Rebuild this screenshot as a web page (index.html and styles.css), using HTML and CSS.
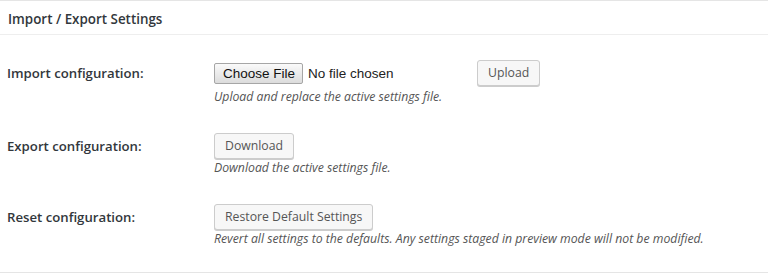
FILE: index.html
```html
<!DOCTYPE html>
<html>
<head>
<meta charset="utf-8">
<link rel="stylesheet" href="styles.css">
</head>
<body>
<div class="postbox">
  <h3 class="hndle">Import / Export Settings</h3>
  <div class="inside">
    <div class="row row-first">
      <div class="label">Import configuration:</div>
      <div class="field">
        <div class="line">
          <span class="file-input"><span class="file-btn">Choose File</span><span class="file-name">No file chosen</span></span>
          <span class="button">Upload</span>
        </div>
        <p class="desc desc-first">Upload and replace the active settings file.</p>
      </div>
    </div>
    <div class="row">
      <div class="label">Export configuration:</div>
      <div class="field">
        <div class="line"><span class="button">Download</span></div>
        <p class="desc">Download the active settings file.</p>
      </div>
    </div>
    <div class="row">
      <div class="label">Reset configuration:</div>
      <div class="field">
        <div class="line"><span class="button">Restore Default Settings</span></div>
        <p class="desc">Revert all settings to the defaults. Any settings staged in preview mode will not be modified.</p>
      </div>
    </div>
  </div>
</div>
</body>
</html>
```
FILE: styles.css
```css
html, body {
  margin: 0;
  padding: 0;
  background: #fff;
}
body {
  font-family: "Open Sans", "Liberation Sans", sans-serif;
  color: #23282d;
  width: 768px;
  height: 274px;
  overflow: hidden;
}
.postbox {
  border-top: 1px solid #e5e5e5;
  border-bottom: 1px solid #e5e5e5;
  height: 273px;
  box-sizing: border-box;
}
.hndle {
  margin: 0;
  font-size: 13.4px;
  font-weight: 600;
  line-height: 20px;
  padding: 8px 8px 5px 8px;
  border-bottom: 1px solid #eeeeee;
  color: #32373c;
}
.inside {
  padding-top: 25px;
}
.row {
  display: flex;
  padding-bottom: 27px;
}
.label {
  width: 207px;
  padding-left: 7px;
  font-size: 13.2px;
  font-weight: 600;
  line-height: 26px;
  color: #32373c;
  flex: none;
}
.field {
  flex: 1;
}
.line {
  display: flex;
  align-items: center;
  height: 26px;
}
.file-input {
  display: flex;
  align-items: center;
  width: 263px;
  font-family: "Liberation Sans", Arial, sans-serif;
  font-size: 13.5px;
  color: #222;
}
.file-btn {
  display: inline-block;
  height: 19px;
  line-height: 19px;
  padding: 0 7px 0 8px;
  border: 1px solid #a6a6a6;
  border-radius: 2px;
  background: linear-gradient(#fafafa, #dcdcdc);
  color: #111;
}
.file-name {
  margin-left: 5px;
}
.button {
  display: inline-block;
  box-sizing: border-box;
  height: 26px;
  line-height: 24px;
  padding: 0 10px;
  border: 1px solid #cccccc;
  border-radius: 3px;
  background: #f7f7f7;
  box-shadow: 0 1px 0 #cccccc;
  color: #555555;
  font-size: 12.25px;
  font-family: "Open Sans", "Liberation Sans", sans-serif;
}
.desc {
  margin: 0;
  font-size: 12.25px;
  font-style: italic;
  line-height: 18px;
  color: #555555;
}
.desc-first {
  margin-top: 2px;
}
```
